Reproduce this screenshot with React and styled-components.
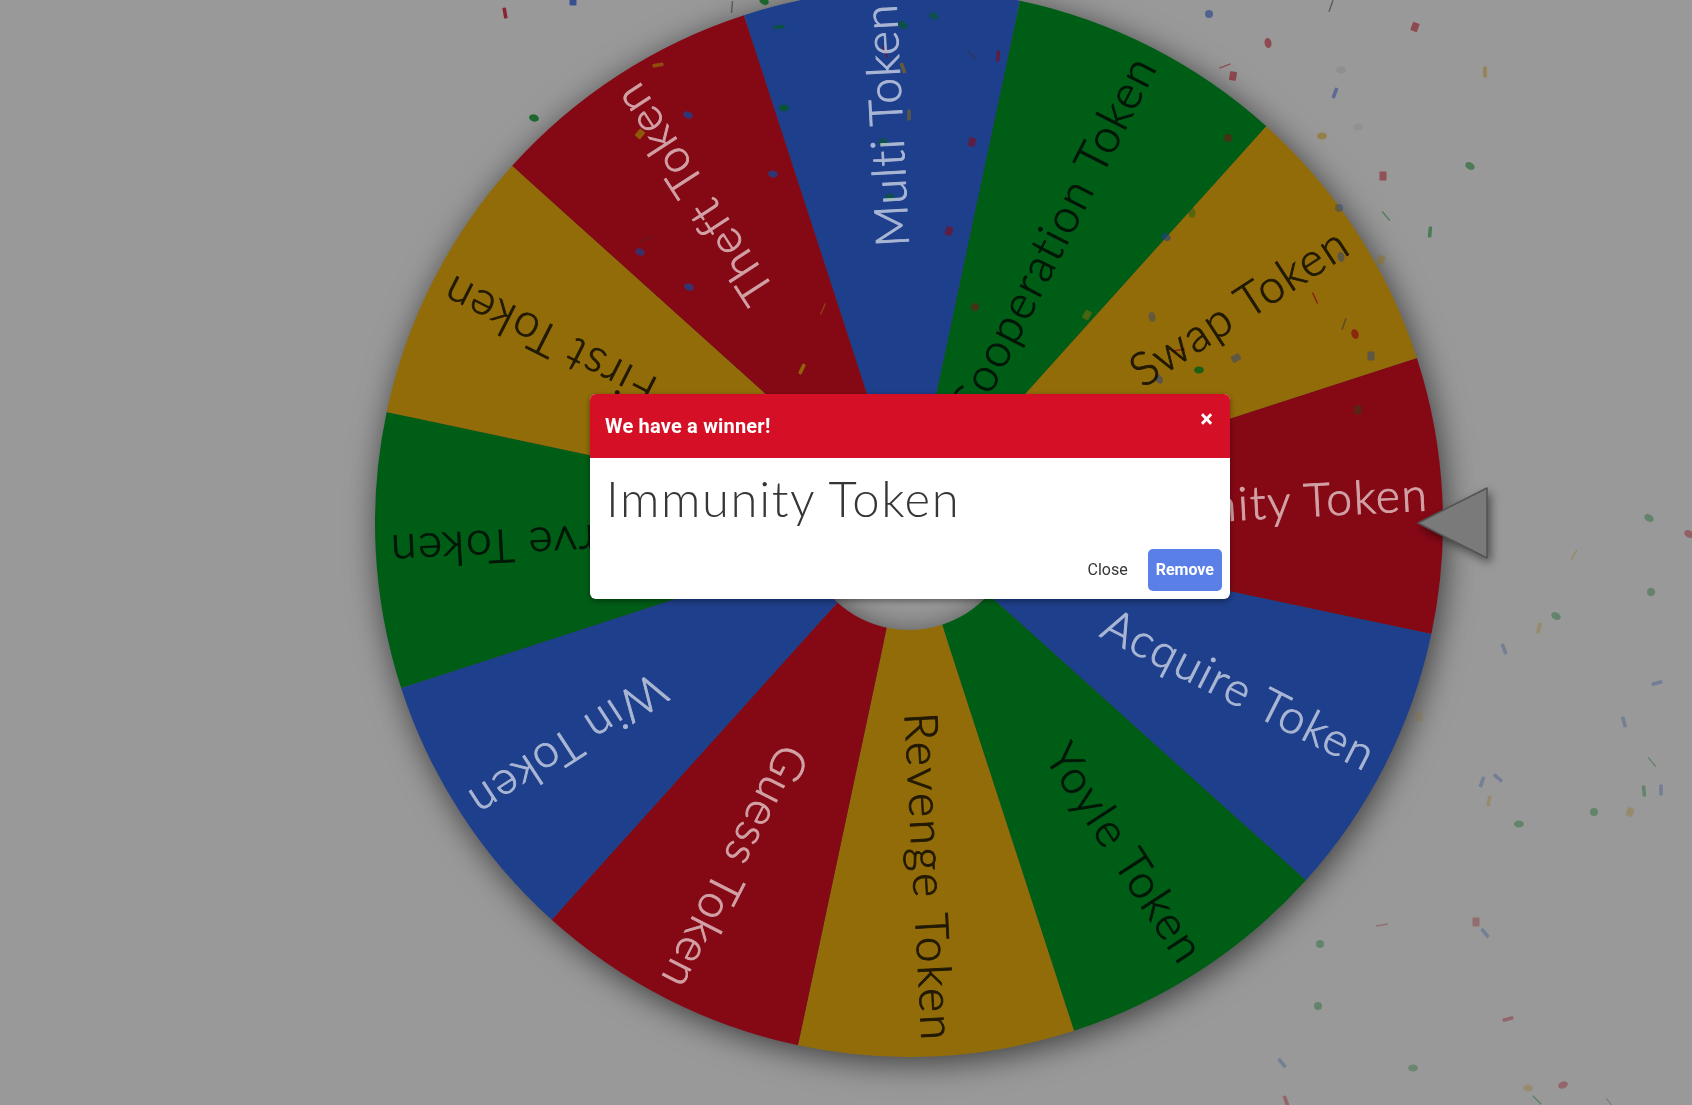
import React from "react";
import styled, { createGlobalStyle } from "styled-components";

const GlobalStyle = createGlobalStyle`
  html, body {
    margin: 0;
    padding: 0;
    background: #fff;
    font-family: "Roboto", "Liberation Sans", sans-serif;
  }
`;

const Page = styled.main`
  position: relative;
  width: 100%;
  height: 100vh;
  overflow: hidden;
  padding-left: 375px;
  box-sizing: border-box;
`;

const WheelBox = styled.div`
  position: relative;
  width: 1068px;
  height: 1068px;
  margin-top: -11px;
`;

const WheelSvg = styled.svg`
  display: block;
  width: 1068px;
  height: 1068px;
  filter: drop-shadow(3px 6px 16px rgba(0, 0, 0, 0.6));
`;

const LabelLayer = styled.svg`
  position: absolute;
  left: 375px;
  top: -11px;
  width: 1068px;
  height: 1068px;
  filter: blur(0.4px);
  pointer-events: none;
`;

const Label = styled.text`
  font-family: "Lato", "Open Sans", sans-serif;
  font-size: 46px;
  font-weight: 300;
  letter-spacing: ${(p) => p.$spacing || 1.7}px;
  text-anchor: end;
  dominant-baseline: central;
  stroke-width: 0.9px;
`;

const Pointer = styled.svg`
  position: absolute;
  left: 1041px;
  top: 494px;
  width: 75px;
  height: 80px;
  overflow: visible;
  filter: drop-shadow(3px 4px 5px rgba(0, 0, 0, 0.5));
`;

const ConfettiLayer = styled.svg`
  position: absolute;
  inset: 0;
  width: 1692px;
  height: 1105px;
  filter: blur(0.4px);
  pointer-events: none;
`;

const Overlay = styled.div`
  position: fixed;
  inset: 0;
  background: rgba(0, 0, 0, 0.4);
  display: flex;
  justify-content: center;
  align-items: flex-start;
  padding: 394px 0 0 128px;
  box-sizing: border-box;
  overflow: hidden;
`;

const Modal = styled.section`
  position: relative;
  width: 640px;
  height: 205px;
  background: #fff;
  border-radius: 6px;
  overflow: hidden;
  display: flex;
  flex-direction: column;
  box-shadow: 0 2px 6px rgba(0, 0, 0, 0.4);
`;

const ModalHeader = styled.header`
  height: 64px;
  flex: none;
  box-sizing: border-box;
  padding: 0 17px 0 15px;
  background: #d50f25;
  color: #fff;
  display: flex;
  align-items: center;
  justify-content: space-between;
`;

const ModalTitle = styled.h2`
  margin: 0;
  font-size: 20px;
  font-weight: 700;
  letter-spacing: 0.2px;
  line-height: 1;
`;

const CloseX = styled.button`
  align-self: flex-start;
  margin-top: 11px;
  padding: 0;
  border: 0;
  background: none;
  color: #fff;
  font-family: inherit;
  font-size: 24px;
  font-weight: 700;
  line-height: 28px;
`;

const ModalBody = styled.div`
  flex: 1;
  padding: 11px 16px 0 16px;
`;

const Winner = styled.p`
  margin: 0;
  font-family: "Lato", "Open Sans", sans-serif;
  font-size: 49px;
  font-weight: 300;
  letter-spacing: 1.6px;
  line-height: 58px;
  color: #363636;
`;

const ModalFooter = styled.footer`
  display: flex;
  justify-content: flex-end;
  align-items: center;
  gap: 8px;
  padding: 8px;
`;

const Button = styled.button`
  height: 42px;
  padding: 0 ${(p) => (p.$primary ? "8px" : "12px")} 2px;
  border: 0;
  border-radius: 5px;
  font-family: inherit;
  font-size: 16px;
  font-weight: ${(p) => (p.$primary ? 700 : 400)};
  color: ${(p) => (p.$primary ? "#fff" : "#363636")};
  background: ${(p) => (p.$primary ? "#5a80e8" : "transparent")};
`;

const PALETTE = {
  red: "#de0f24",
  blue: "#3369e8",
  green: "#009b26",
  gold: "#f3b50e",
};

const TOKENS = [
  { name: "Immunity Token", color: "red", light: true },
  { name: "Acquire Token", color: "blue", light: true },
  { name: "Yoyle Token", color: "green" },
  { name: "Revenge Token", color: "gold", spacing: 2.6 },
  { name: "Guess Token", color: "red", light: true },
  { name: "Win Token", color: "blue", light: true },
  { name: "Reserve Token", color: "green" },
  { name: "First Token", color: "gold" },
  { name: "Theft Token", color: "red", light: true },
  { name: "Multi Token", color: "blue", light: true, spacing: 1.2 },
  { name: "Cooperation Token", color: "green" },
  { name: "Swap Token", color: "gold" },
];

const C = 534;
const R = 534;
const HUB = 107;

function slicePath(mid) {
  const a = ((mid - 15) * Math.PI) / 180;
  const b = ((mid + 15) * Math.PI) / 180;
  const p = (r, t) => `${C + r * Math.cos(t)} ${C + r * Math.sin(t)}`;
  return `M${p(HUB, a)} L${p(R, a)} A${R} ${R} 0 0 1 ${p(R, b)} L${p(HUB, b)} A${HUB} ${HUB} 0 0 0 ${p(HUB, a)}Z`;
}

// x, y, shape, colour, rotation, opacity
const CONFETTI = [
  [505, 13, "dash", "red", 170, 0.8], [573, 1, "chip", "blue", 0, 0.8], [764, 1, "oval", "green", 30, 0.8],
  [732, 7, "line", "gray", 5, 0.6], [658, 65, "dash", "gold", 80, 0.7], [534, 118, "oval", "green", 15, 0.8],
  [779, 27, "dash", "green", 85, 0.6], [784, 108, "oval", "green", 0, 0.7], [688, 115, "oval", "blue", 20, 0.8],
  [640, 134, "chip", "gold", 40, 0.8], [773, 174, "oval", "blue", 10, 0.8], [646, 239, "line", "gray", 60, 0.5],
  [640, 252, "oval", "blue", 20, 0.7], [689, 287, "oval", "blue", 20, 0.8], [823, 309, "line", "gold", 25, 0.6],
  [693, 340, "oval", "gold", 80, 0.8], [802, 369, "dash", "gold", 25, 0.9], [903, 25, "oval", "green", 30, 0.6],
  [885, 52, "line", "red", 155, 0.8], [903, 68, "dash", "gold", 160, 0.6], [909, 115, "dash", "gold", 180, 0.5],
  [883, 142, "oval", "green", 0, 0.5], [890, 197, "oval", "green", 0, 0.5], [905, 334, "chip", "blue", 0, 0.3],
  [1209, 14, "disc", "blue", 0, 0.6], [1268, 43, "oval", "red", 80, 0.55], [1415, 27, "chip", "red", 20, 0.55],
  [1331, 6, "line", "gray", 20, 0.6], [1225, 66, "line", "red", 70, 0.5], [1233, 76, "chip", "red", 10, 0.55],
  [1341, 70, "oval", "gray", 0, 0.1], [1335, 93, "dash", "blue", 20, 0.5], [1322, 136, "oval", "gold", 0, 0.55],
  [1358, 127, "oval", "gray", 0, 0.08], [1470, 166, "oval", "green", 30, 0.5], [1383, 176, "chip", "red", 0, 0.5],
  [1386, 216, "line", "green", 140, 0.5], [1430, 232, "dash", "green", 5, 0.5], [1339, 208, "disc", "blue", 0, 0.4],
  [1381, 260, "chip", "gold", 20, 0.4], [1241, 209, "chip", "gold", 45, 0.6], [1192, 213, "oval", "green", 90, 0.4],
  [1166, 237, "oval", "blue", 30, 0.6], [1228, 138, "disc", "red", 0, 0.5], [934, 16, "oval", "green", 20, 0.5],
  [972, 55, "line", "gray", 130, 0.5], [998, 56, "dash", "red", 5, 0.6], [972, 142, "chip", "red", 20, 0.6],
  [949, 231, "chip", "red", 20, 0.6], [975, 307, "disc", "red", 0, 0.5], [1087, 315, "chip", "gold", 30, 0.5],
  [1315, 298, "line", "red", 155, 0.8], [1344, 324, "line", "gray", 20, 0.6], [1355, 334, "oval", "red", 70, 0.7],
  [1371, 356, "chip", "blue", 0, 0.45], [1152, 317, "oval", "blue", 80, 0.4], [1236, 358, "chip", "blue", 60, 0.45],
  [1199, 370, "oval", "green", 0, 0.8], [1159, 379, "oval", "blue", 60, 0.5], [1341, 257, "oval", "blue", 80, 0.45],
  [1179, 350, "line", "red", 80, 0.7], [1358, 410, "chip", "green", 0, 0.35], [1485, 72, "dash", "gold", 0, 0.5],
  [1556, 616, "oval", "green", 30, 0.35], [1539, 628, "dash", "gold", 15, 0.3], [1504, 649, "dash", "blue", 160, 0.3],
  [1657, 683, "dash", "blue", 75, 0.3], [1624, 722, "dash", "blue", 165, 0.3], [1652, 762, "line", "green", 140, 0.35],
  [1644, 791, "dash", "green", 175, 0.35], [1661, 790, "dash", "blue", 0, 0.3], [1482, 782, "dash", "blue", 20, 0.3],
  [1498, 778, "dash", "blue", 130, 0.3], [1489, 801, "dash", "gold", 10, 0.3], [1594, 812, "disc", "green", 0, 0.35],
  [1630, 812, "chip", "gold", 20, 0.3], [1519, 824, "oval", "green", 0, 0.35], [1419, 717, "chip", "gold", 0, 0.2],
  [1476, 922, "chip", "red", 0, 0.3], [1485, 933, "dash", "blue", 140, 0.3], [1508, 1019, "dash", "red", 75, 0.35],
  [1413, 1068, "oval", "green", 0, 0.3], [1528, 1088, "oval", "gold", 0, 0.3], [1563, 1085, "oval", "red", 160, 0.35],
  [1537, 1100, "line", "green", 135, 0.4], [1382, 925, "line", "red", 80, 0.3], [1610, 1103, "line", "gray", 140, 0.25],
  [1689, 534, "oval", "red", 30, 0.4], [1649, 518, "oval", "green", 30, 0.35], [1574, 555, "line", "gold", 30, 0.35],
  [1651, 592, "disc", "green", 0, 0.35], [1318, 1006, "disc", "green", 0, 0.35], [1320, 944, "disc", "green", 0, 0.35],
  [1282, 1063, "dash", "blue", 140, 0.3], [1286, 1101, "dash", "red", 160, 0.35], [1268, 850, "disc", "green", 0, 0.3],
];

const INK = { ...PALETTE, gray: "#555" };

function Piece({ x, y, shape, color, rot, alpha }) {
  const fill = INK[color];
  const props = { fill, opacity: alpha, transform: `translate(${x} ${y}) rotate(${rot})` };
  if (shape === "disc") return <circle r="4" {...props} />;
  if (shape === "oval") return <ellipse rx="5" ry="3.5" {...props} />;
  if (shape === "chip") return <rect x="-3.5" y="-4.5" width="7" height="9" rx="1" {...props} />;
  if (shape === "line") return <rect x="-0.7" y="-6" width="1.4" height="12" {...props} />;
  return <rect x="-1.8" y="-5.5" width="3.6" height="11" rx="0.8" {...props} />;
}

export default function App() {
  return (
    <>
      <GlobalStyle />
      <Page>
        <WheelBox>
          <WheelSvg viewBox="0 0 1068 1068">
            {TOKENS.map((token, i) => {
              const mid = -3 + i * 30;
              return <path key={token.name} d={slicePath(mid)} fill={PALETTE[token.color]} />;
            })}
          </WheelSvg>
          <Pointer viewBox="0 0 75 80">
            <path d="M2 40 L71 5 L71 75 Z" fill="#ccc" stroke="#8a8a8a" strokeWidth="1.5" strokeLinejoin="round" />
          </Pointer>
        </WheelBox>
        <ConfettiLayer viewBox="0 0 1692 1105">
          {CONFETTI.map(([x, y, shape, color, rot, alpha]) => (
            <Piece key={`${x}-${y}`} x={x} y={y} shape={shape} color={color} rot={rot} alpha={alpha} />
          ))}
        </ConfettiLayer>
        <Overlay>
          <LabelLayer viewBox="0 0 1068 1068">
            {TOKENS.map((token, i) => {
              const ink = token.light ? "#fff" : "#000";
              return (
                <Label
                  key={token.name}
                  x={C + R * 0.974}
                  y={C - 3}
                  fill={ink}
                  stroke={ink}
                  $spacing={token.spacing}
                  opacity={token.light ? 0.62 : 0.78}
                  transform={`rotate(${-3 + i * 30} ${C} ${C})`}
                >
                  {token.name}
                </Label>
              );
            })}
          </LabelLayer>
          <Modal>
            <ModalHeader>
              <ModalTitle>We have a winner!</ModalTitle>
              <CloseX>×</CloseX>
            </ModalHeader>
            <ModalBody>
              <Winner>Immunity Token</Winner>
            </ModalBody>
            <ModalFooter>
              <Button>Close</Button>
              <Button $primary>Remove</Button>
            </ModalFooter>
          </Modal>
        </Overlay>
      </Page>
    </>
  );
}
